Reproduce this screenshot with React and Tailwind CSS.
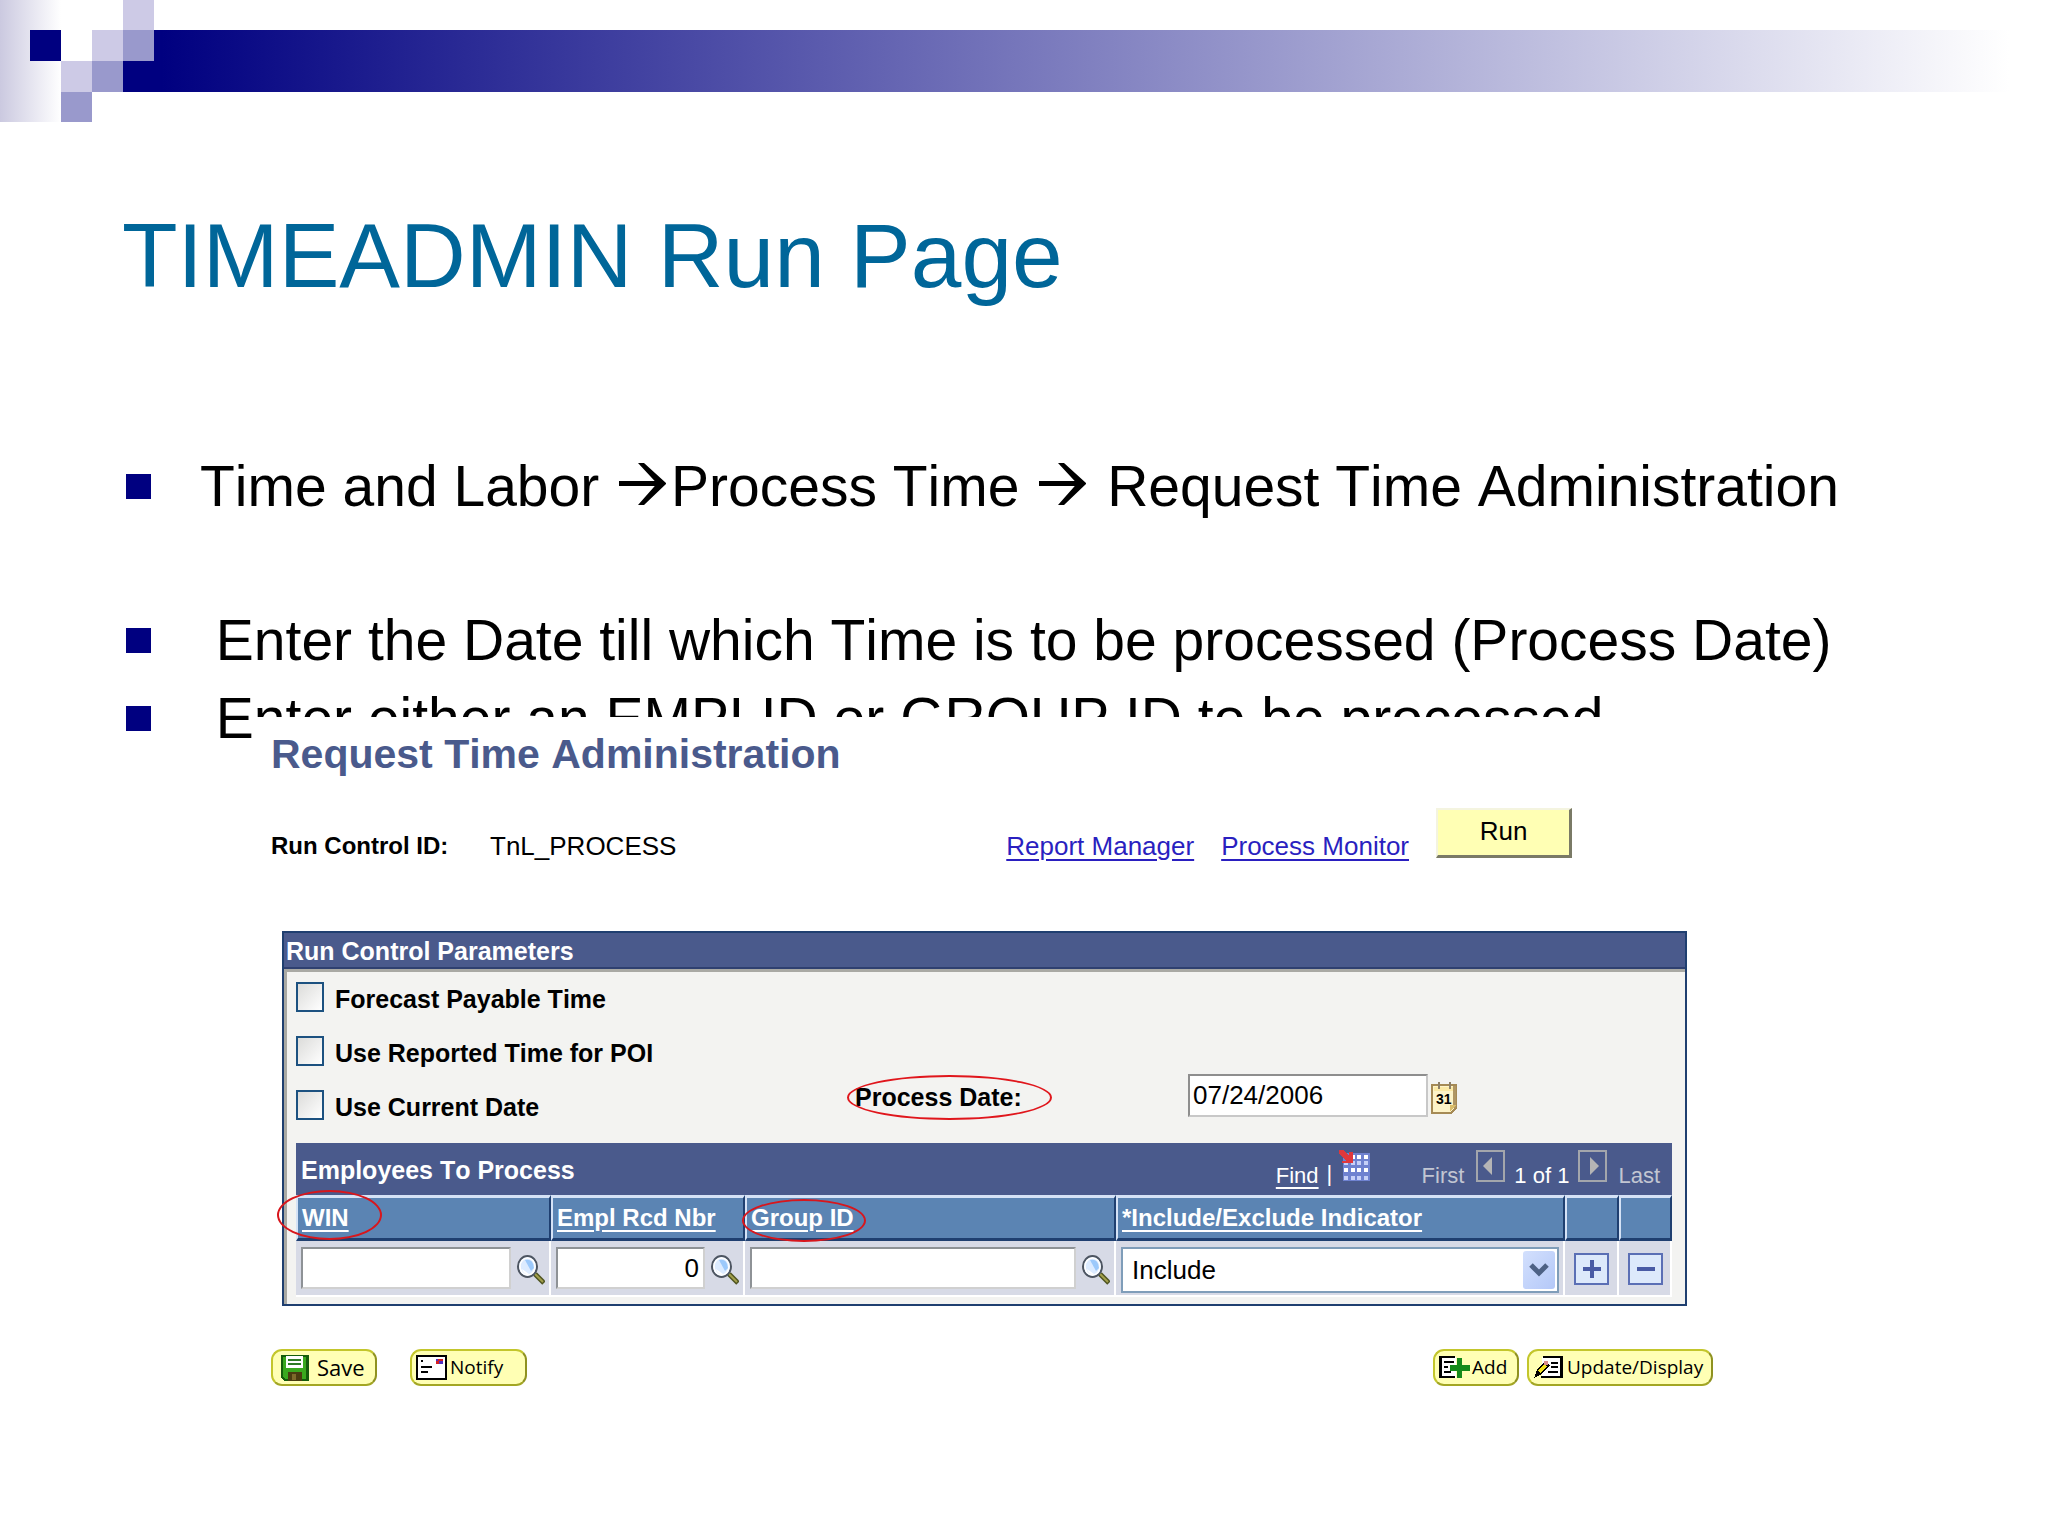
import { useState } from "react";

// =========================
// ICONS
// =========================
function Arrow() {
  return (
    <svg
      role="img"
      aria-label="→"
      viewBox="0 0 56 44"
      className="inline-block h-[44px] w-[56px] align-baseline"
    >
      <path d="M4 21.500H46" fill="none" stroke="black" strokeWidth="5" />
      <path d="M23 1H29L51 21V22L29 43H23L42 21.500Z" fill="black" />
    </svg>
  );
}

function SearchIcon() {
  return (
    <svg viewBox="0 0 28 30" className="h-[30px] w-[28px]" aria-hidden="true">
      <path d="M18 19L27 28" stroke="#4f5420" strokeWidth="5" />
      <path d="M17 18L26 27" stroke="#a3a04c" strokeWidth="2" />
      <ellipse cx="10.500" cy="11.500" rx="9.500" ry="10.500" fill="#e4efff" stroke="#4d5561" strokeWidth="2" />
      <ellipse cx="10.500" cy="11.500" rx="7.500" ry="8.500" fill="#dcebff" stroke="#ffffff" strokeWidth="1.500" />
      <path d="M8 5Q16 3 17 13L14 16Z" fill="#9cc9fb" />
      <path d="M5 14L12 19Q7 20 5 14Z" fill="#ffffff" />
    </svg>
  );
}

function CalendarIcon() {
  return (
    <svg viewBox="0 0 26 32" className="h-[32px] w-[26px]" aria-hidden="true" shapeRendering="crispEdges">
      <path d="M1 3H25V26L20 31H1Z" fill="#fdf3c8" stroke="#a58a55" strokeWidth="2" />
      <path d="M3 5H22V9H3Z" fill="#fbe9a4" />
      <path d="M22 4H25V26H22Z" fill="#b09663" />
      <path d="M19 23H25L19 30Z" fill="#d9bd6a" />
      <path d="M7 0H9V7H7ZM18 0H20V7H18Z" fill="#8d8068" />
      <text x="5" y="22" fontSize="14" fontWeight="bold" fontFamily="Liberation Sans, sans-serif" fill="black">
        31
      </text>
    </svg>
  );
}

function GridIcon() {
  return (
    <svg viewBox="0 0 31 32" className="h-[32px] w-[31px]" aria-hidden="true" shapeRendering="crispEdges">
      <rect x="4" y="3" width="27" height="28" fill="#6f82d0" />
      {[5, 12, 18, 25].map((x) =>
        [5, 11, 18, 26].map((y) => (
          <rect key={`${x}-${y}`} x={x} y={y} width="4" height="4" fill={y === 18 || y === 5 ? "#ffffff" : "#c6d0f8"} />
        ))
      )}
      <path d="M0 0H5L10 6V2H14V13H3V11H7L0 4Z" fill="#e0383c" />
    </svg>
  );
}

function SaveIcon() {
  return (
    <svg viewBox="0 0 28 26" className="h-[26px] w-[28px]" aria-hidden="true" shapeRendering="crispEdges">
      <path d="M0 0H28V26H3L0 23Z" fill="#145c0c" />
      <path d="M2 2H25V24H4L2 22Z" fill="#3aa81e" />
      <rect x="5" y="1" width="17" height="12" fill="#ffffff" />
      <path d="M7 4H20V6H7ZM7 8H20V10H7Z" fill="#2d7a24" />
      <rect x="7" y="17" width="14" height="9" fill="#4a3c10" />
      <rect x="11" y="19" width="4" height="6" fill="#7d6a2a" />
    </svg>
  );
}

function NotifyIcon() {
  return (
    <svg viewBox="0 0 31 25" className="h-[25px] w-[31px]" aria-hidden="true" shapeRendering="crispEdges">
      <rect x="1" y="1" width="29" height="23" fill="white" stroke="black" strokeWidth="2" />
      <path d="M5 5H7V7H5ZM5 11H16V13H5ZM5 16H12V18H5Z" fill="black" />
      <rect x="20" y="4" width="7" height="5" fill="#d42020" />
      <path d="M20 4H22V6H20ZM23 6H27V9H23Z" fill="#5030c0" />
    </svg>
  );
}

function AddIcon() {
  return (
    <svg viewBox="0 0 31 24" className="h-[24px] w-[31px]" aria-hidden="true" shapeRendering="crispEdges">
      <path d="M1 1H17V22H1Z" fill="white" />
      <path d="M0 0H16V2H3V20H16V22H0Z" fill="black" />
      <path d="M5 5H15V7H5ZM5 10H9V12H5ZM5 15H12V17H5Z" fill="black" />
      <path d="M18 2H23V9H31V15H23V22H18V15H11V9H18Z" fill="#158a1a" />
    </svg>
  );
}

function UpdateIcon() {
  return (
    <svg viewBox="0 0 30 24" className="h-[24px] w-[30px]" aria-hidden="true" shapeRendering="crispEdges">
      <path d="M9 1H29V22H9Z" fill="white" />
      <path d="M10 0H30V22H8V20H27V2H10Z" fill="black" />
      <path d="M18 6H25V8H18ZM18 10H25V12H18ZM15 15H25V17H15Z" fill="black" />
      <path d="M1 22L4 14L12 5L17 9L9 18Z" fill="black" />
      <path d="M5 15L11 8L14 10L8 17Z" fill="#f2e21c" />
      <path d="M11 5H15V9H11Z" fill="#d98c8c" />
    </svg>
  );
}

// =========================
// SMALL PARTS
// =========================
function CheckRow({ id, label }) {
  return (
    <div className="flex h-[36px] items-start gap-[11px]">
      <input
        id={id}
        type="checkbox"
        className="h-[30px] w-[28px] appearance-none border-2 border-[#1c5180] bg-linear-to-br from-[#dcdcda] to-white checked:bg-[#1c5180]"
      />
      <label htmlFor={id} className="text-[25px] leading-[34px] font-bold">
        {label}
      </label>
    </div>
  );
}

function LookupField({ label, value, alignRight }) {
  const [text, setText] = useState(value);

  return (
    <div className="flex gap-[6px]">
      <input
        aria-label={label}
        value={text}
        onChange={(e) => setText(e.target.value)}
        className={
          "h-[42px] min-w-0 flex-1 border-2 border-[#d0d0d0] border-t-[#8e9296] border-l-[#8e9296] bg-white px-[4px] text-[26px] " +
          (alignRight ? "text-right" : "text-left")
        }
      />
      <button type="button" aria-label={`Look up ${label}`} className="mt-[8px] h-[30px] w-[28px]">
        <SearchIcon />
      </button>
    </div>
  );
}

function ToolButton({ icon, label, className }) {
  return (
    <button
      type="button"
      className={
        "flex h-[37px] items-center rounded-[11px] border-2 border-[#c3c62c] border-r-[#8f9220] border-b-[#a3a624] bg-[#ffffb4] font-['Open_Sans','Noto_Sans',sans-serif] whitespace-nowrap " +
        className
      }
    >
      {icon}
      {label}
    </button>
  );
}

function PageArrow({ label, path }) {
  return (
    <button type="button" aria-label={label} className="h-[32px] w-[29px] border-2 border-[#a3a6ac]">
      <svg viewBox="0 0 25 28" className="h-[28px] w-[25px]" aria-hidden="true">
        <path d={path} fill="#b5b5b5" />
      </svg>
    </button>
  );
}

// =========================
// TOP DECORATION
// =========================
function Banner() {
  return (
    <div
      aria-hidden="true"
      className="grid grid-cols-[30px_31px_31px_31px_31px_1fr] grid-rows-[30px_31px_31px_30px]"
    >
      <div className="col-span-2 col-start-1 row-span-4 row-start-1 bg-linear-to-r/srgb from-[#cbc9e0] to-white" />
      <div className="col-start-2 row-start-2 bg-[#000080]" />
      <div className="col-span-2 col-start-5 row-span-2 row-start-2 bg-linear-to-r/srgb from-[#000080] from-2% to-white to-98%" />
      <div className="col-start-5 row-start-1 bg-[#cdcae6]" />
      <div className="col-start-4 row-start-2 bg-[#cdcae6]" />
      <div className="col-start-5 row-start-2 bg-[#9999cc]" />
      <div className="col-start-3 row-start-3 bg-[#cdcae6]" />
      <div className="col-start-4 row-start-3 bg-[#9999cc]" />
      <div className="col-start-3 row-start-4 bg-[#9999cc]" />
    </div>
  );
}

function Bullet({ className, children }) {
  return (
    <li className={"flex items-center gap-[49px] " + className}>
      <span className="size-[25px] shrink-0 bg-[#000080]" />
      <span className="whitespace-pre">{children}</span>
    </li>
  );
}

// =========================
// EMPLOYEES GRID
// =========================
const th =
  "h-[46px] border-t-[3px] border-r-2 border-b-[3px] border-l-2 border-t-[#d5e2f6] border-r-[#1f3f70] border-b-[#1f3f70] border-l-[#d5e2f6] bg-[#5b84b3] px-[4px] text-left text-[24px] leading-[24px] font-bold whitespace-nowrap text-white";
const td = "h-[56px] border-r-2 border-b-2 border-white bg-[#d7dae6] pr-[4px] pl-[5px] pt-[6px] align-top";

function EmployeesGrid() {
  const [indicator, setIndicator] = useState("Include");

  return (
    <div className="mt-[17px]">
      <div className="flex h-[52px] justify-between bg-[#4a5a8c] pr-[12px] pl-[5px] text-white">
        <h3 className="text-[25px] leading-[54px] font-bold">Employees To Process</h3>

        <div className="flex items-start pt-[7px] text-[22px] leading-[24px]">
          <a href="#find" className="mt-[14px] underline underline-offset-4">
            Find
          </a>
          <span className="mt-[12px] ml-[8px] w-[12px]">|</span>
          <button type="button" aria-label="Download" className="h-[32px] w-[31px]">
            <GridIcon />
          </button>
          <span className="mt-[14px] mr-[12px] ml-[52px] text-[#c2c6d2]">First</span>
          <PageArrow label="Previous" path="M5 14L14 5V23Z" />
          <span className="mx-[9px] mt-[14px]">1 of 1</span>
          <PageArrow label="Next" path="M19 14L10 5V23Z" />
          <span className="mt-[14px] ml-[11px] text-[#c2c6d2]">Last</span>
        </div>
      </div>

      <table className="w-full table-fixed border-separate border-spacing-0">
        <colgroup>
          <col className="w-[255px]" />
          <col className="w-[194px]" />
          <col className="w-[371px]" />
          <col />
          <col className="w-[54px]" />
          <col className="w-[53px]" />
        </colgroup>
        <thead>
          <tr>
            <th className={th}>
              <span className="relative">
                <a href="#win" className="underline underline-offset-4">WIN</a>
                <span className="absolute -top-[14px] -left-[25px] h-[50px] w-[105px] rounded-[50%] border-2 border-[#d8161c]" />
              </span>
            </th>
            <th className={th}>
              <a href="#rcd" className="underline underline-offset-4">Empl Rcd Nbr</a>
            </th>
            <th className={th}>
              <span className="relative">
                <a href="#group" className="underline underline-offset-4">Group ID</a>
                <span className="absolute -top-[5px] -left-[9px] h-[43px] w-[124px] rounded-[50%] border-2 border-[#d8161c]" />
              </span>
            </th>
            <th className={th}>
              <a href="#indicator" className="underline underline-offset-4">*Include/Exclude Indicator</a>
            </th>
            <th className={th} />
            <th className={th} />
          </tr>
        </thead>
        <tbody>
          <tr>
            <td className={td}>
              <LookupField label="WIN" value="" />
            </td>
            <td className={td}>
              <LookupField label="Empl Rcd Nbr" value="0" alignRight />
            </td>
            <td className={td}>
              <LookupField label="Group ID" value="" />
            </td>
            <td className={td}>
              <div className="relative">
                <select
                  aria-label="Include/Exclude Indicator"
                  value={indicator}
                  onChange={(e) => setIndicator(e.target.value)}
                  className="h-[46px] w-full appearance-none border-2 border-[#7f9db9] bg-white px-[9px] text-[26px]"
                >
                  <option>Include</option>
                  <option>Exclude</option>
                </select>
                <span className="pointer-events-none absolute top-[4px] right-[4px] flex h-[38px] w-[32px] items-center justify-center rounded-[3px] bg-linear-to-br from-[#d3e0fd] to-[#b4c8f8]">
                  <svg viewBox="0 0 20 14" className="h-[14px] w-[20px]" aria-hidden="true">
                    <path d="M2 2L10 10L18 2" fill="none" stroke="#4d6185" strokeWidth="5" />
                  </svg>
                </span>
              </div>
            </td>
            <td className={td}>
              <button
                type="button"
                aria-label="Add row"
                className="mt-[6px] ml-[4px] flex h-[32px] w-[35px] items-center justify-center border-2 border-[#5b6fb5] bg-[#dde9fb]"
              >
                <svg viewBox="0 0 18 18" className="size-[18px]" aria-hidden="true">
                  <path d="M0 9H18M9 0V18" stroke="#4a5ba5" strokeWidth="4" />
                </svg>
              </button>
            </td>
            <td className={td}>
              <button
                type="button"
                aria-label="Delete row"
                className="mt-[6px] ml-[4px] flex h-[32px] w-[35px] items-center justify-center border-2 border-[#5b6fb5] bg-[#dde9fb]"
              >
                <svg viewBox="0 0 18 18" className="size-[18px]" aria-hidden="true">
                  <path d="M0 9H18" stroke="#4a5ba5" strokeWidth="4" />
                </svg>
              </button>
            </td>
          </tr>
        </tbody>
      </table>
    </div>
  );
}

// =========================
// PAGE
// =========================
function App() {
  const [date, setDate] = useState("07/24/2006");

  return (
    <div className="min-h-screen bg-white font-['Liberation_Sans',Arial,sans-serif] text-black [font-kerning:none]">
      <Banner />

      <h1 className="mt-[82px] pl-[122px] text-[91px] leading-[104px] text-[#006699]">TIMEADMIN Run Page</h1>

      <ul className="mt-[139px] pl-[126px] text-[57px] leading-[78px]">
        <Bullet className="mb-[76px]">
          Time and Labor <Arrow />Process Time <Arrow /> Request Time Administration
        </Bullet>
        <Bullet className="">{" Enter the Date till which Time is to be processed (Process Date)"}</Bullet>
        <Bullet className="">{" Enter either an EMPLID or GROUP ID to be processed"}</Bullet>
      </ul>

      {/* sits over the lower half of the last bullet */}
      <section className="relative -mt-[40px] mr-[320px] ml-[252px] bg-white pt-[14px] pr-[15px] pl-[19px]">
        <h2 className="text-[41px] leading-[46px] font-bold text-[#4a5a8c]">Request Time Administration</h2>

        <div className="mt-[31px] flex h-[50px] items-end text-[26px] leading-[24px]">
          <span className="w-[219px] text-[24px] font-bold">Run Control ID:</span>
          <span>TnL_PROCESS</span>
          <div className="mr-[141px] ml-auto flex items-end gap-[27px] text-[#2a1fc0]">
            <a href="#reports" className="underline underline-offset-4">Report Manager</a>
            <a href="#monitor" className="underline underline-offset-4">Process Monitor</a>
            <button
              type="button"
              className="h-[50px] w-[136px] border-t-2 border-r-3 border-b-3 border-l-2 border-t-[#f4f4e0] border-r-[#7a7a66] border-b-[#7a7a66] border-l-[#f4f4e0] bg-[#ffffb4] pb-[4px] text-black"
            >
              Run
            </button>
          </div>
        </div>

        {/* PARAMETERS */}
        <div className="mt-[73px] mr-[26px] ml-[11px] border-2 border-[#1f3f70]">
          <h2 className="h-[36px] border-b-2 border-[#2f4070] bg-[#4a5a8c] pl-[2px] text-[25px] leading-[36px] font-bold text-white">
            Run Control Parameters
          </h2>
          <div className="border-t-[3px] border-l-[3px] border-[#a9a9a4] bg-[#f3f3f1] pt-[10px] pr-[13px] pb-[7px] pl-[9px]">
            <div className="flex items-end">
              <div className="flex w-[559px] flex-col gap-[18px]">
                <CheckRow id="forecast" label="Forecast Payable Time" />
                <CheckRow id="reported" label="Use Reported Time for POI" />
                <CheckRow id="current" label="Use Current Date" />
              </div>
              <div className="flex items-end pb-[9px]">
                <div className="w-[333px]">
                  <label htmlFor="process-date" className="relative text-[25px] leading-[40px] font-bold">
                    Process Date:
                    <span className="absolute -top-[8px] -left-[8px] h-[45px] w-[205px] rounded-[50%] border-2 border-[#e0161c]" />
                  </label>
                </div>
                <input
                  id="process-date"
                  value={date}
                  onChange={(e) => setDate(e.target.value)}
                  className="h-[43px] w-[240px] border-2 border-[#c8c8c8] border-t-[#8e8e8e] border-l-[#8e8e8e] bg-white px-[3px] text-[26px]"
                />
                <button type="button" aria-label="Choose date" className="ml-[3px] h-[38px] w-[26px]">
                  <CalendarIcon />
                </button>
              </div>
            </div>

            <EmployeesGrid />
          </div>
        </div>

        {/* TOOLBAR */}
        <div className="mt-[43px] flex justify-between">
          <div className="flex gap-[33px]">
            <ToolButton icon={<SaveIcon />} label="Save" className="w-[106px] gap-[8px] pl-[8px] text-[22px]" />
            <ToolButton icon={<NotifyIcon />} label="Notify" className="w-[117px] gap-[3px] pl-[4px] text-[19px]" />
          </div>
          <div className="flex gap-[8px]">
            <ToolButton icon={<AddIcon />} label="Add" className="w-[86px] gap-[2px] pl-[4px] text-[19px]" />
            <ToolButton icon={<UpdateIcon />} label="Update/Display" className="w-[186px] gap-[4px] pl-[4px] text-[19px]" />
          </div>
        </div>
      </section>
    </div>
  );
}

export default App;
